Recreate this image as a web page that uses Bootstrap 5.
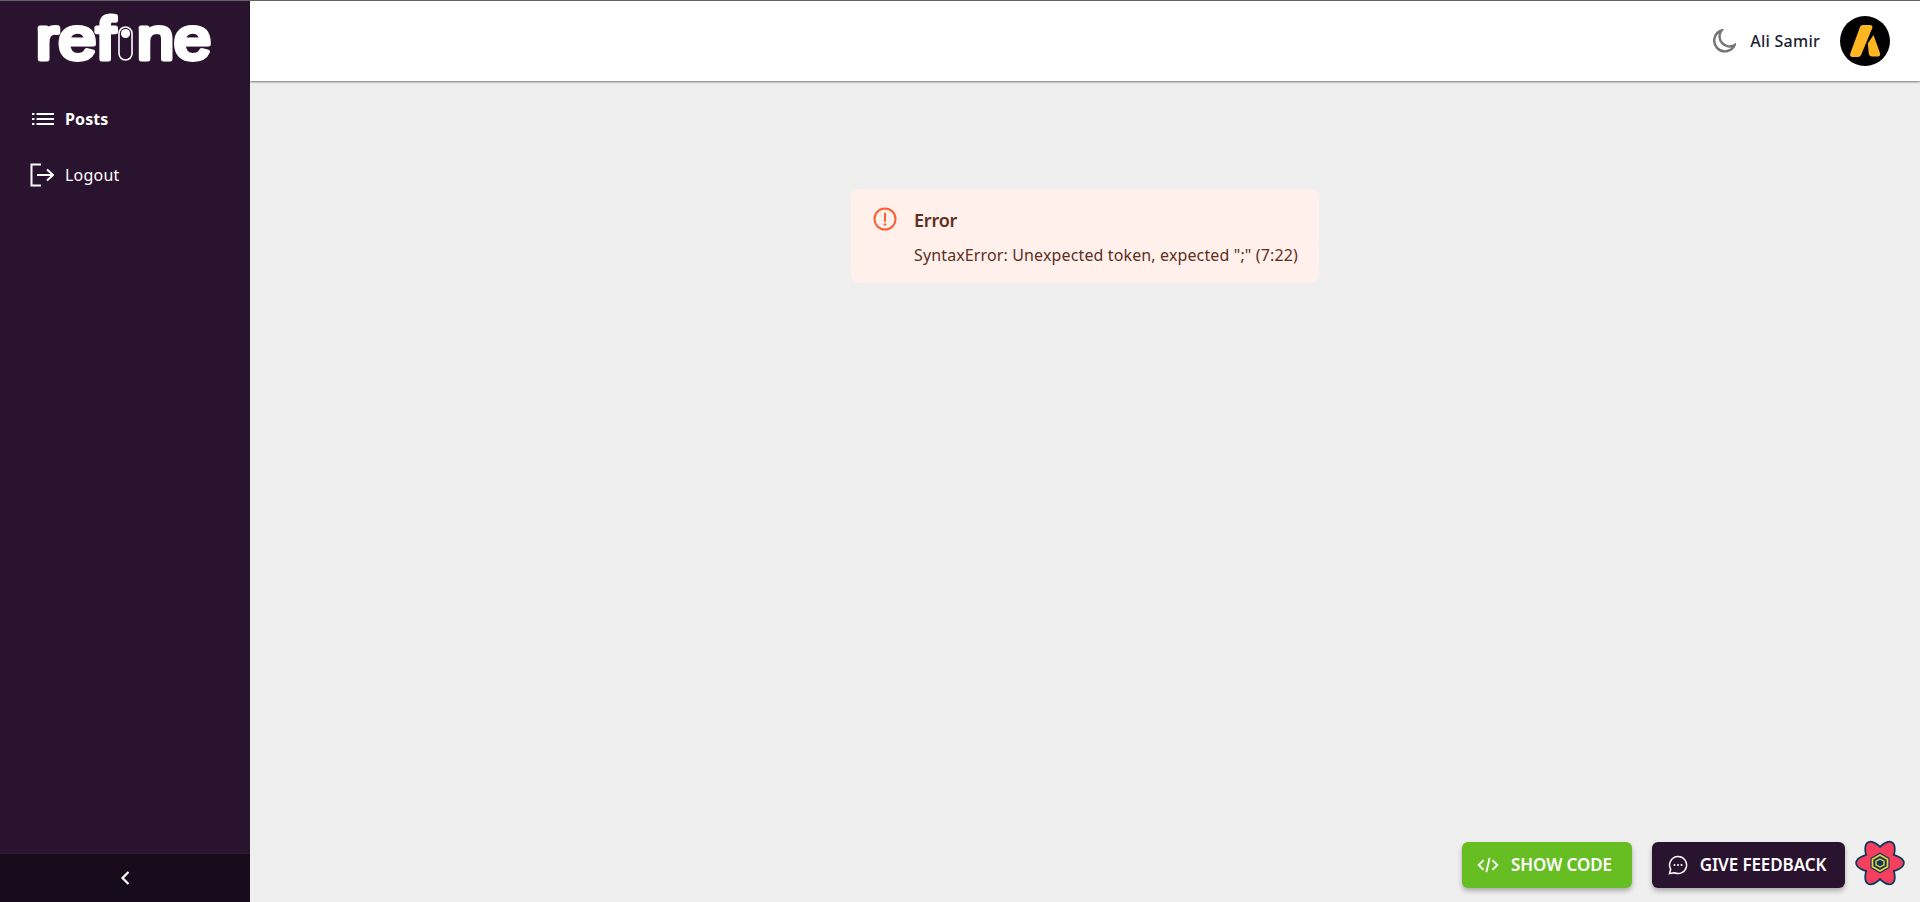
<!DOCTYPE html>
<html lang="en">
<head>
<meta charset="utf-8">
<title>refine</title>
<link href="https://cdn.jsdelivr.net/npm/bootstrap@5.3.0/dist/css/bootstrap.min.css" rel="stylesheet">
<style>
html,body{height:100%;}
body{font-family:"Noto Sans","Open Sans",sans-serif;background:#efefef;overflow:hidden;}
.shell{height:902px;border-top:1px solid #666;}
.side-rail{width:250px;background:#2a132e;color:#fff;}
.brand-box{height:75px;}
.side-menu{padding-top:15px;}
.side-item{height:56px;padding-left:30px;gap:11px;color:#fff;font-size:16px;letter-spacing:.2px;}
.side-item.is-on{font-weight:700;letter-spacing:.1px;}
.side-icon{width:24px;height:24px;}
.collapse-bar{height:49px;background:#180b1b;border-top:1px solid #2e1c31;}
.top-strip{height:80px;background:#fff;box-shadow:0 1px 2px rgba(0,0,0,.5);padding-right:30px;}
.moon-wrap{width:24px;height:24px;margin-right:14px;}
.who{font-size:16px;font-weight:500;color:#1c2230;letter-spacing:.25px;margin-right:20px;}
.face{width:50px;height:50px;background:#000;}
.stage{padding-top:108px;}
.err-box{width:468px;height:94px;background:#fff0eb;color:#5e2f1c;border-radius:8px;padding:19px 16px 0 22px;}
.err-icon{width:24px;height:24px;margin-right:17px;margin-top:-1px;}
.err-title{font-size:18px;font-weight:600;line-height:24px;letter-spacing:-.2px;}
.err-msg{font-size:16px;line-height:24px;margin-top:11px;letter-spacing:.13px;white-space:nowrap;}
.dock{padding:0 15px 14px 0;gap:20px;}
.dock-btn{height:46px;border:0;border-radius:6px;color:#fff;font-size:17px;font-weight:600;letter-spacing:-.1px;gap:12px;box-shadow:0 3px 5px rgba(0,0,0,.28);white-space:nowrap;}
.code-btn{width:170px;background:#67be23;padding:0 5px 0 0;}
.talk-btn{width:193px;background:#2a132e;padding:0 3px 0 0;}
.atom{width:50px;height:46px;margin-left:-10px;margin-bottom:2px;}
</style>
</head>
<body>
<div class="shell d-flex">
  <aside class="side-rail d-flex flex-column flex-shrink-0">
    <div class="brand-box d-flex justify-content-center">
      <svg width="250" height="75" viewBox="0 0 250 75" role="img" aria-label="refine">
        <g fill="#fff" stroke="#fff" stroke-width="5" stroke-linejoin="round" font-family="Liberation Sans, sans-serif" font-size="60">
          <text x="36" y="58" textLength="79" lengthAdjust="spacingAndGlyphs">ref</text>
          <text x="137" y="58" textLength="74" lengthAdjust="spacingAndGlyphs">ne</text>
        </g>
        <rect x="119" y="26" width="13" height="33" rx="6.500" fill="none" stroke="#fff" stroke-width="1.600"/>
        <circle cx="125.500" cy="32.500" r="4.600" fill="#fff"/>
      </svg>
    </div>
    <nav class="side-menu flex-grow-1">
      <a class="side-item is-on d-flex align-items-center text-decoration-none" href="#">
        <svg class="side-icon" viewBox="0 0 24 24" fill="#fff"><path d="M2 6h2.500v2H2zM2 11h2.500v2H2zM2 16h2.500v2H2zM6.500 6H24v2H6.500zM6.500 11H24v2H6.500zM6.500 16H24v2H6.500z"/></svg>
        <span>Posts</span>
      </a>
      <a class="side-item d-flex align-items-center text-decoration-none" href="#">
        <svg class="side-icon" viewBox="0 0 24 24" fill="none" stroke="#fff" stroke-width="2"><path d="M11 1.500H1.500v21H11"/><path d="M7 12h16M17 6.500 23 12l-6 5.500"/></svg>
        <span>Logout</span>
      </a>
    </nav>
    <div class="collapse-bar d-flex align-items-center justify-content-center">
      <svg width="24" height="24" viewBox="0 0 24 24" fill="none" stroke="#fff" stroke-width="2.200"><path d="M15.500 6 9.500 12l6 6"/></svg>
    </div>
  </aside>
  <div class="d-flex flex-column flex-grow-1">
    <header class="top-strip d-flex align-items-center justify-content-end flex-shrink-0">
      <span class="moon-wrap d-flex">
        <svg width="24" height="24" viewBox="0 0 24 24" fill="none" stroke="#757575" stroke-width="2.400"><path d="M9.500 1.500a10.700 10.700 0 1 0 13.200 14.500A10 10 0 0 1 9.500 1.500z"/></svg>
      </span>
      <span class="who">Ali Samir</span>
      <span class="face rounded-circle d-flex">
        <svg width="50" height="50" viewBox="0 0 50 50" fill="#fdb522"><path d="M23 9h7c2 0 3 1.500 2.300 3L21.500 38c-.6 1.600-1.600 3-3.500 3h-5.500c-2 0-3-1.500-2.300-3.200L20 11c.5-1.300 1.500-2 3-2z"/><path d="M33.500 19 40 37c.6 1.800-.3 3.500-2 3.500h-6c-1.800 0-2.700-1-3.200-2.500L27.800 27.500z"/></svg>
      </span>
    </header>
    <main class="stage flex-grow-1 d-flex justify-content-center">
      <div class="err-box d-flex">
        <svg class="err-icon flex-shrink-0" viewBox="0 0 24 24" fill="none" stroke="#fa5f31" stroke-width="2"><circle cx="12" cy="12" r="10.500"/><path d="M12 6.500v7.500" stroke-linecap="round"/><circle cx="12" cy="17.500" r="1.300" fill="#fa5f31" stroke="none"/></svg>
        <div>
          <div class="err-title">Error</div>
          <div class="err-msg">SyntaxError: Unexpected token, expected ";" (7:22)</div>
        </div>
      </div>
    </main>
    <div class="dock d-flex align-items-end justify-content-end flex-shrink-0">
      <button class="dock-btn code-btn d-flex align-items-center justify-content-center" type="button">
        <svg width="22" height="22" viewBox="0 0 20 20" fill="none" stroke="#fff" stroke-width="1.700"><path d="M6 5.500 1.500 10 6 14.500M14 5.500l4.500 4.500-4.500 4.500M11.500 3.500l-3 13"/></svg>
        <span>SHOW CODE</span>
      </button>
      <button class="dock-btn talk-btn d-flex align-items-center justify-content-center" type="button">
        <svg width="20" height="20" viewBox="0 0 20 20" fill="none" stroke="#fff" stroke-width="1.500"><path d="M10 1.500a8.500 8.500 0 1 1-3.500 16.200L1.500 18.500l1.200-4.300A8.500 8.500 0 0 1 10 1.500z"/><circle cx="6.500" cy="10" r="1" fill="#fff" stroke="none"/><circle cx="10" cy="10" r="1" fill="#fff" stroke="none"/><circle cx="13.500" cy="10" r="1" fill="#fff" stroke="none"/></svg>
        <span>GIVE FEEDBACK</span>
      </button>
      <svg class="atom" viewBox="0 0 50 46">
        <g fill="none" stroke="#0a3a5c" stroke-width="3.500">
          <ellipse cx="25" cy="23" rx="23" ry="9"/>
          <ellipse cx="25" cy="23" rx="23" ry="9" transform="rotate(60 25 23)"/>
          <ellipse cx="25" cy="23" rx="23" ry="9" transform="rotate(120 25 23)"/>
        </g>
        <g fill="#f7405f">
          <ellipse cx="25" cy="23" rx="23" ry="9"/>
          <ellipse cx="25" cy="23" rx="23" ry="9" transform="rotate(60 25 23)"/>
          <ellipse cx="25" cy="23" rx="23" ry="9" transform="rotate(120 25 23)"/>
        </g>
        <path d="M25 12.500 34.500 18v10L25 33.500 15.500 28V18z" fill="#0a3a5c"/>
        <path d="M25 15 32.500 19.300v7.400L25 31l-7.500-4.300v-7.400z" fill="none" stroke="#f5cf3b" stroke-width="1.700"/>
        <path d="M25 19 29 21.200v3.600L25 27l-4-2.200v-3.600z" fill="none" stroke="#f5cf3b" stroke-width="1.400"/>
      </svg>
    </div>
  </div>
</div>
<script src="https://cdn.jsdelivr.net/npm/bootstrap@5.3.0/dist/js/bootstrap.bundle.min.js"></script>
</body>
</html>
